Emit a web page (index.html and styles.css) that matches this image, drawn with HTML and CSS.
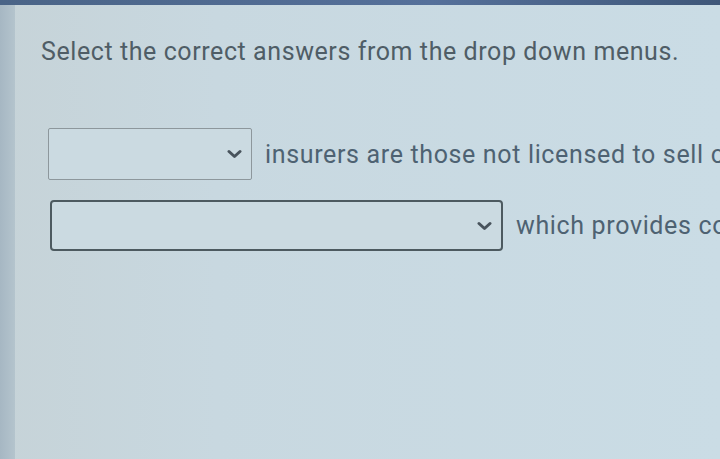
FILE: index.html
```html
<!DOCTYPE html>
<html lang="en">
<head>
  <meta charset="UTF-8" />
  <meta name="viewport" content="width=device-width, initial-scale=1.0"/>
  <title>Drop Down Question</title>
  <link rel="stylesheet" href="styles.css">
</head>
<body>

<div class="topbar"></div>

<div class="page">
  <aside class="rail"></aside>

  <main class="question">
    <p class="prompt">Select the correct answers from the drop down menus.</p>

    <div class="line">
      <div class="dropdown short" tabindex="0" role="combobox" aria-label="Answer 1">
        <svg width="15" height="10" viewBox="0 0 15 10" aria-hidden="true">
          <path d="M2 2.5 L7.5 7.5 L13 2.5" fill="none" stroke="#48535c" stroke-width="3" stroke-linecap="round" stroke-linejoin="round"/>
        </svg>
      </div>
      <span class="stem">insurers are those not licensed to sell coverage in the state.</span>
    </div>

    <div class="line">
      <div class="dropdown long" tabindex="0" role="combobox" aria-label="Answer 2">
        <svg width="15" height="10" viewBox="0 0 15 10" aria-hidden="true">
          <path d="M2 2.5 L7.5 7.5 L13 2.5" fill="none" stroke="#48535c" stroke-width="3" stroke-linecap="round" stroke-linejoin="round"/>
        </svg>
      </div>
      <span class="stem">which provides coverage for the insured.</span>
    </div>
  </main>
</div>

</body>
</html>
```

FILE: styles.css
```css
html, body {
  margin: 0;
  padding: 0;
  height: 100%;
  overflow: hidden;
}

body {
  font-family: Roboto, "Liberation Sans", sans-serif;
  background: linear-gradient(90deg, #c6d3d8 0%, #c8d8e0 30%, #cadce5 100%);
  color: #4d5c66;
  display: flex;
  flex-direction: column;
}

.topbar {
  height: 5px;
  background: linear-gradient(90deg, #4a6487, #55709a 60%, #3f5779);
  flex-shrink: 0;
}

.page {
  flex: 1;
  display: flex;
}

/* strip on the left edge of the screen */
.rail {
  width: 15px;
  flex-shrink: 0;
  background: linear-gradient(90deg, #a6b7c3, #b4c4cd);
}

.question {
  flex: 1;
  padding: 28px 0 0 26px;
  white-space: nowrap;
  overflow: hidden;
}

.prompt {
  margin: 0 0 57px;
  font-size: 25px;
  letter-spacing: 0.58px;
  color: #4f5d66;
  line-height: 38px;
}

.line {
  display: flex;
  align-items: center;
  margin-bottom: 20px;
}

.dropdown {
  height: 52px;
  box-sizing: border-box;
  display: flex;
  align-items: center;
  justify-content: flex-end;
  padding-right: 9px;
  background: #cbdae1;
  flex-shrink: 0;
  cursor: pointer;
}

.dropdown.short {
  width: 204px;
  border: 1.5px solid #8d979c;
  border-radius: 2px;
  margin-left: 7px;
}

.dropdown.long {
  width: 453px;
  height: 51px;
  border: 2px solid #4d5a60;
  border-radius: 4px;
  margin-left: 9px;
}

.stem {
  font-size: 25px;
  color: #4e6272;
  margin-left: 13px;
  letter-spacing: 0.65px;
}
```
